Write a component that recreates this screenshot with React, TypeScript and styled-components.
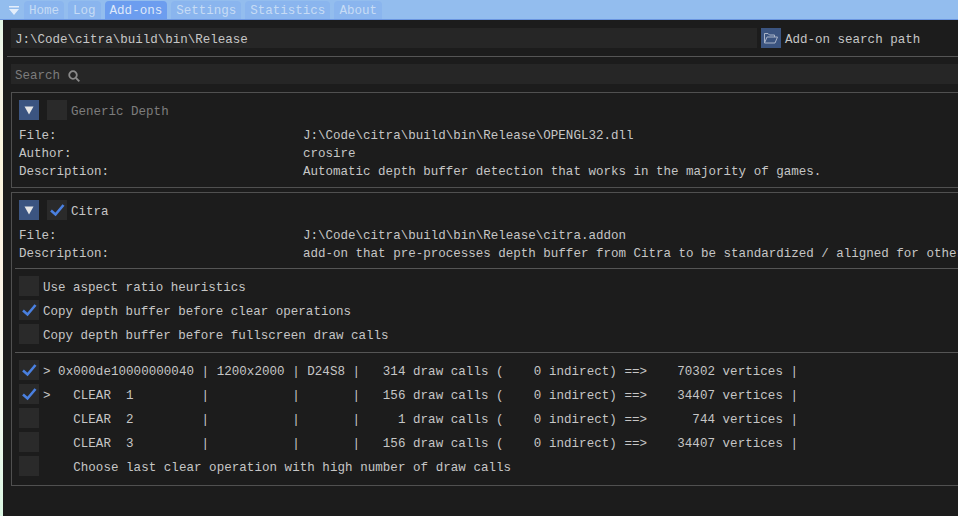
import React from "react";
import styled, { createGlobalStyle } from "styled-components";

const Global = createGlobalStyle`
  html, body { margin: 0; padding: 0; background: #1c1c1c; }
  #root { width: 958px; height: 516px; overflow: hidden; }
`;

const Page = styled.div`
  width: 958px;
  height: 516px;
  display: flex;
  overflow: hidden;
  font-family: "Liberation Mono", "DejaVu Sans Mono", monospace;
  font-size: 12.53px;
  color: #c6c6c6;
  background: #1c1c1c;
`;
const BackdropStrip = styled.div`
  width: 3px;
  flex: none;
  background: linear-gradient(180deg, #d9f7e0 0%, #f4f4ea 12%, #fbf5dc 30%, #fdf3e4 50%, #f4f6ee 75%, #dcf7e4 100%);
`;
const Window = styled.div`
  flex: none;
  width: 955px;
  display: flex;
  flex-direction: column;
`;
const TitleBar = styled.div`
  height: 20px;
  margin-left: -3px;
  width: 958px;
  display: flex;
  align-items: flex-end;
  gap: 4px;
  padding-left: 24px;
  box-sizing: border-box;
  background: #93bdee;
  border-bottom: 1px solid #6b96e0;
  position: relative;
  flex: none;
`;
const CollapseGlyph = styled.svg`
  position: absolute;
  left: 9px;
  top: 6px;
`;
const Tab = styled.div<{ $active?: boolean }>`
  height: 18px;
  padding: 2px 5px 0;
  box-sizing: border-box;
  display: flex;
  align-items: center;
  border-radius: 4px 4px 0 0;
  color: ${(p) => (p.$active ? "#dfe9fa" : "#c7dcf5")};
  background: ${(p) => (p.$active ? "#6c9def" : "#8ab5ee")};
`;
const Body = styled.div`
  flex: 1;
  min-height: 0;
  padding: 8px 0 0 8px;
  display: flex;
  flex-direction: column;
  overflow: hidden;
`;
const PathRow = styled.div`
  display: flex;
  align-items: center;
  height: 20px;
  flex: none;
`;
const Input = styled.div<{ $wide?: boolean }>`
  height: 20px;
  display: flex;
  align-items: center;
  gap: 8px;
  padding: 3px 0 0 4px;
  box-sizing: border-box;
  background: #262626;
  flex: none;
  width: ${(p) => (p.$wide ? "950px" : "746px")};
  white-space: pre;
`;
const Hint = styled.span`
  color: #7c7c7c;
`;
const IconButton = styled.div`
  width: 20px;
  height: 20px;
  flex: none;
  display: flex;
  align-items: center;
  justify-content: center;
  background: #3b5480;
`;
const PathLabel = styled.span`
  margin-left: 4px;
  padding-top: 3px;
  white-space: pre;
`;
const FolderSlot = styled.div`
  margin-left: 4px;
`;
const Rule = styled.div<{ $before: number; $after: number }>`
  height: 1px;
  flex: none;
  background: #555;
  margin: ${(p) => `${p.$before}px 0 ${p.$after}px -4px`};
`;
const Panel = styled.div<{ $top: number; $height: number }>`
  flex: none;
  width: 960px;
  height: ${(p) => p.$height}px;
  margin-top: ${(p) => p.$top}px;
  box-sizing: border-box;
  border: 1px solid #505050;
  border-right: none;
  padding: 7px 0 0 7px;
  display: flex;
  flex-direction: column;
`;
const PanelHeader = styled.div`
  display: flex;
  align-items: center;
  height: 20px;
  gap: 8px;
  flex: none;
`;
const Check = styled.div`
  width: 20px;
  height: 20px;
  flex: none;
  background: #2a2a2a;
  display: flex;
  align-items: center;
  justify-content: center;
`;
const HeaderLabel = styled.span<{ $dim?: boolean }>`
  margin-left: -4px;
  padding-top: 3px;
  color: ${(p) => (p.$dim ? "#7c7c7c" : "#c6c6c6")};
`;
const InfoGrid = styled.div`
  margin-top: 7px;
  display: grid;
  grid-template-columns: 284px 1fr;
  grid-auto-rows: 18px;
  align-items: center;
  white-space: pre;
`;
const OptionList = styled.div`
  display: flex;
  flex-direction: column;
  gap: 4px;
  flex: none;
`;
const Option = styled.div`
  display: flex;
  align-items: center;
  gap: 4px;
  height: 20px;
  white-space: pre;
`;
const OptionLabel = styled.span<{ $spaced?: boolean }>`
  padding-top: 3px;
  letter-spacing: ${(p) => (p.$spaced ? "0.04px" : "normal")};
`;

const Triangle = () => (
  <svg width="10" height="9" viewBox="0 0 10 9">
    <path d="M0.5 0.5H9.5L5 8.5Z" fill="#e6e6e6" />
  </svg>
);
const Tick = () => (
  <svg width="16" height="14" viewBox="0 0 16 14">
    <path d="M2 7.5L6.5 11.5L14.5 2" fill="none" stroke="#4a80e0" strokeWidth="2.6" />
  </svg>
);
const Folder = () => (
  <svg width="14" height="11" viewBox="0 0 14 11" fill="none" stroke="#aab4c8" strokeWidth="1">
    <path d="M0.5 10V0.5H4L5.5 2H10.5V4" />
    <path d="M0.5 10L3 4H13.5L11 10Z" />
  </svg>
);
const SearchIcon = () => (
  <svg width="12" height="12" viewBox="0 0 12 12" fill="none" stroke="#8a8a8a" strokeWidth="1.8">
    <circle cx="5" cy="5" r="3.8" />
    <path d="M8 8L11.3 11.3" />
  </svg>
);

const Sep = "|";
const options = [
  { label: "Use aspect ratio heuristics", on: false },
  { label: "Copy depth buffer before clear operations", on: true },
  { label: "Copy depth buffer before fullscreen draw calls", on: false },
];
const rows = [
  { on: true, text: `> 0x000de10000000040 ${Sep} 1200x2000 ${Sep} D24S8 ${Sep}   314 draw calls (    0 indirect) ==>    70302 vertices ${Sep}` },
  { on: true, text: `>   CLEAR  1         ${Sep}           ${Sep}       ${Sep}   156 draw calls (    0 indirect) ==>    34407 vertices ${Sep}` },
  { on: false, text: `    CLEAR  2         ${Sep}           ${Sep}       ${Sep}     1 draw calls (    0 indirect) ==>      744 vertices ${Sep}` },
  { on: false, text: `    CLEAR  3         ${Sep}           ${Sep}       ${Sep}   156 draw calls (    0 indirect) ==>    34407 vertices ${Sep}` },
  { on: false, text: `    Choose last clear operation with high number of draw calls` },
];

export default function App() {
  return (
    <Page>
      <Global />
      <BackdropStrip />
      <Window>
        <TitleBar>
          <CollapseGlyph width="11" height="10" viewBox="0 0 11 10">
            <path d="M0 0H10V1.5H0Z M0 3H10L5 9Z" fill="#e4eefb" />
          </CollapseGlyph>
          <Tab>Home</Tab>
          <Tab>Log</Tab>
          <Tab $active>Add-ons</Tab>
          <Tab>Settings</Tab>
          <Tab>Statistics</Tab>
          <Tab>About</Tab>
        </TitleBar>
        <Body>
          <PathRow>
            <Input>J:\Code\citra\build\bin\Release</Input>
            <FolderSlot>
              <IconButton><Folder /></IconButton>
            </FolderSlot>
            <PathLabel>Add-on search path</PathLabel>
          </PathRow>
          <Rule $before={8} $after={7} />
          <Input $wide>
            <Hint>Search</Hint>
            <SearchIcon />
          </Input>
          <Panel $top={8} $height={96}>
            <PanelHeader>
              <IconButton><Triangle /></IconButton>
              <Check />
              <HeaderLabel $dim>Generic Depth</HeaderLabel>
            </PanelHeader>
            <InfoGrid>
              <span>File:</span>
              <span>J:\Code\citra\build\bin\Release\OPENGL32.dll</span>
              <span>Author:</span>
              <span>crosire</span>
              <span>Description:</span>
              <span>Automatic depth buffer detection that works in the majority of games.</span>
            </InfoGrid>
          </Panel>
          <Panel $top={4} $height={294}>
            <PanelHeader>
              <IconButton><Triangle /></IconButton>
              <Check><Tick /></Check>
              <HeaderLabel>Citra</HeaderLabel>
            </PanelHeader>
            <InfoGrid>
              <span>File:</span>
              <span>J:\Code\citra\build\bin\Release\citra.addon</span>
              <span>Description:</span>
              <span>add-on that pre-processes depth buffer from Citra to be standardized / aligned for other add-ons to consume it.</span>
            </InfoGrid>
            <Rule $before={5} $after={7} />
            <OptionList>
              {options.map((o) => (
                <Option key={o.label}>
                  <Check>{o.on && <Tick />}</Check>
                  <OptionLabel>{o.label}</OptionLabel>
                </Option>
              ))}
            </OptionList>
            <Rule $before={8} $after={7} />
            <OptionList>
              {rows.map((r) => (
                <Option key={r.text}>
                  <Check>{r.on && <Tick />}</Check>
                  <OptionLabel $spaced>{r.text}</OptionLabel>
                </Option>
              ))}
            </OptionList>
          </Panel>
        </Body>
      </Window>
    </Page>
  );
}
